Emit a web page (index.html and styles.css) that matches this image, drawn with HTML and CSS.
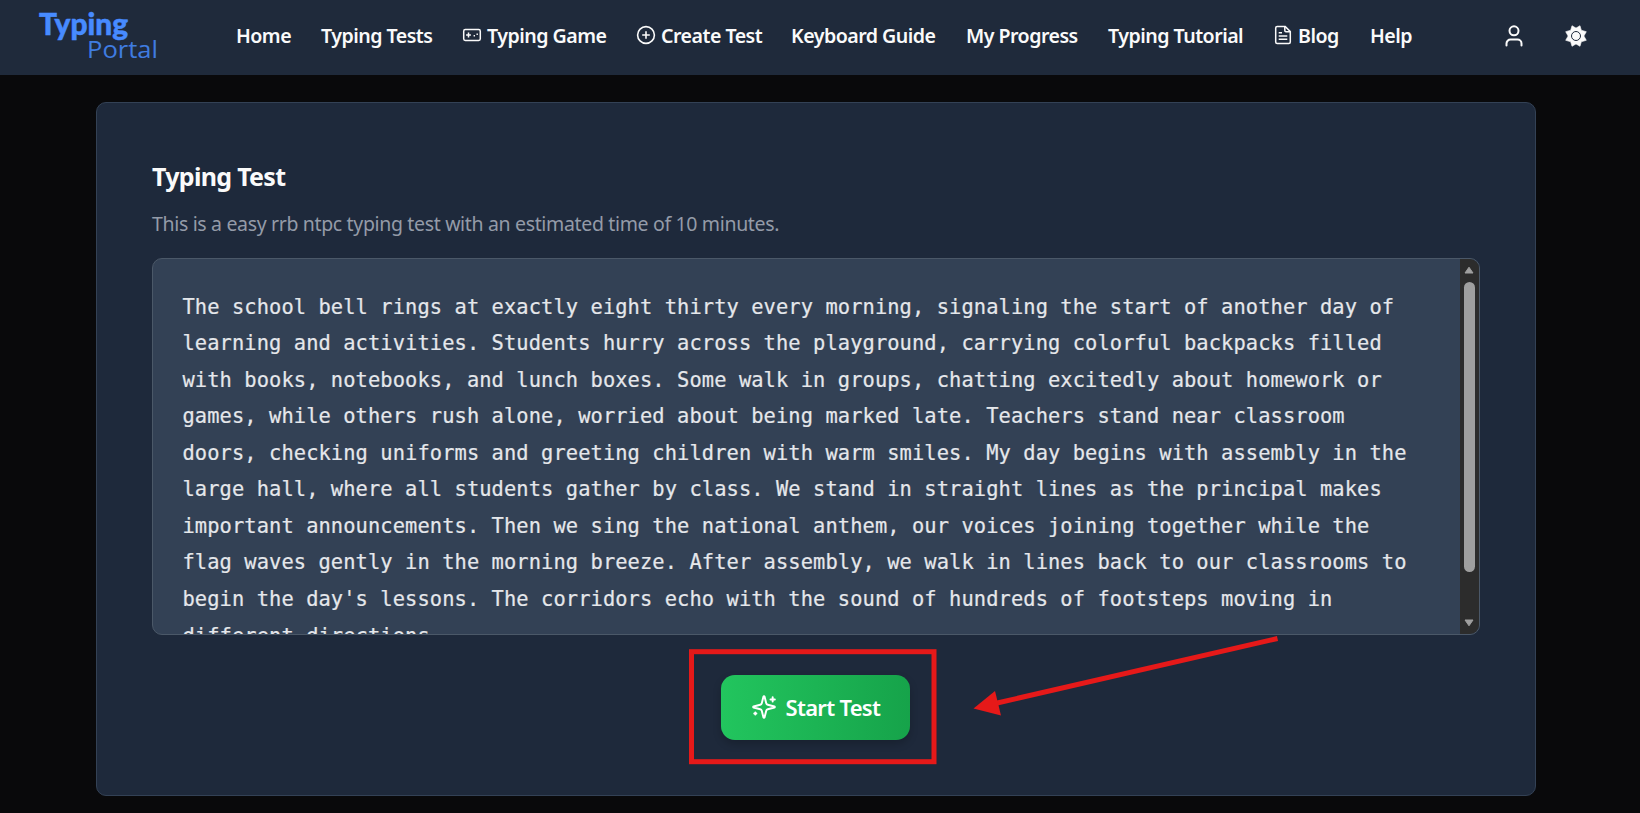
FILE: index.html
```html
<!DOCTYPE html>
<html lang="en">
<head>
  <meta charset="UTF-8" />
  <meta name="viewport" content="width=device-width, initial-scale=1.0"/>
  <title>Typing Portal</title>
  <link rel="stylesheet" href="styles.css">
</head>
<body>

  <!-- Header -->
  <header>
    <a class="logo" href="#">
      <svg width="130" height="64" viewBox="0 0 130 64">
        <text class="logo-top" x="9" y="33.5" textLength="89" lengthAdjust="spacingAndGlyphs">Typing</text>
        <text class="logo-bottom" x="57" y="57" textLength="71" lengthAdjust="spacingAndGlyphs">Portal</text>
      </svg>
    </a>
    <nav>
      <a class="home" href="#">Home</a>
      <a class="tests" href="#">Typing Tests</a>
      <a class="game" href="#">
        <svg width="20" height="20" viewBox="0 0 20 20" fill="none" stroke="currentColor" stroke-width="1.5">
          <rect x="1.7" y="4.6" width="16.6" height="10.8" rx="1.6"/>
          <path d="M6.5 7.6v4.8M4.1 10h4.8"/>
          <path d="M11.6 10.8h1.4M14.5 9.2h1.4"/>
        </svg>
        <span>Typing Game</span>
      </a>
      <a class="create" href="#">
        <svg width="20" height="20" viewBox="0 0 20 20" fill="none" stroke="currentColor" stroke-width="1.6">
          <circle cx="10" cy="10" r="8.4"/>
          <path d="M10 6.2v7.6M6.2 10h7.6"/>
        </svg>
        <span>Create Test</span>
      </a>
      <a class="guide" href="#">Keyboard Guide</a>
      <a class="progress" href="#">My Progress</a>
      <a class="tutorial" href="#">Typing Tutorial</a>
      <a class="blog" href="#">
        <svg width="18" height="20" viewBox="0 0 18 20" fill="none" stroke="currentColor" stroke-width="1.5" stroke-linejoin="round">
          <path d="M11 1.4H3.2A1.5 1.5 0 0 0 1.7 2.9v14.2a1.5 1.5 0 0 0 1.5 1.5h11.6a1.5 1.5 0 0 0 1.5-1.5V6.5z"/>
          <path d="M10.8 1.6v3.9a1.2 1.2 0 0 0 1.2 1.2h4.1M4.7 7.7H8M4.7 11h8.6M4.7 14.3h8.6"/>
        </svg>
        <span>Blog</span>
      </a>
      <a class="help" href="#">Help</a>
    </nav>
    <div class="tools">
      <svg width="22" height="24" viewBox="0 0 22 24" fill="none" stroke="currentColor" stroke-width="2" stroke-linecap="round">
        <circle cx="11" cy="6.8" r="4.5"/>
        <path d="M3.5 21.4v-1.9a4 4 0 0 1 4-4h7a4 4 0 0 1 4 4v1.9"/>
      </svg>
      <svg width="24" height="24" viewBox="0 0 24 24">
        <path fill="currentColor" d="M12 4.1 16 1.7 17.3 6.2 22.3 7.7 19.9 12 22.3 16.3 17.3 17.8 16 22.3 12 19.9 8 22.3 6.7 17.8 1.7 16.3 4.1 12 1.7 7.7 6.7 6.2 8 1.7z" stroke="currentColor" stroke-width=".6" stroke-linejoin="round"/>
        <circle class="sun-ring" cx="12" cy="12" r="4.5"/>
      </svg>
    </div>
  </header>

  <!-- Main Content -->
  <main>
    <h1>Typing Test</h1>
    <p class="info">This is a easy rrb ntpc typing test with an estimated time of 10 minutes.</p>

    <div class="passage">
      <p>The school bell rings at exactly eight thirty every morning, signaling the start of another day of learning and activities. Students hurry across the playground, carrying colorful backpacks filled with books, notebooks, and lunch boxes. Some walk in groups, chatting excitedly about homework or games, while others rush alone, worried about being marked late. Teachers stand near classroom doors, checking uniforms and greeting children with warm smiles. My day begins with assembly in the large hall, where all students gather by class. We stand in straight lines as the principal makes important announcements. Then we sing the national anthem, our voices joining together while the flag waves gently in the morning breeze. After assembly, we walk in lines back to our classrooms to begin the day's lessons. The corridors echo with the sound of hundreds of footsteps moving in different directions.</p>
      <div class="scrollbar">
        <svg width="10" height="8" viewBox="0 0 10 8"><path d="M5 1.2 9 7H1z"/></svg>
        <div class="thumb"></div>
        <svg class="down" width="10" height="8" viewBox="0 0 10 8"><path d="M5 6.8 1 1h8z"/></svg>
      </div>
    </div>

    <button class="start-btn">
      <svg width="26" height="26" viewBox="0 0 24 24" fill="none" stroke="currentColor" stroke-width="1.8" stroke-linecap="round" stroke-linejoin="round">
        <path d="M9.94 15.5A2 2 0 0 0 8.5 14.06l-6.14-1.58a.5.5 0 0 1 0-.96L8.5 9.94A2 2 0 0 0 9.94 8.5l1.58-6.14a.5.5 0 0 1 .96 0L14.06 8.5a2 2 0 0 0 1.44 1.44l6.14 1.58a.5.5 0 0 1 0 .96l-6.14 1.58a2 2 0 0 0-1.44 1.44l-1.58 6.14a.5.5 0 0 1-.96 0z"/>
        <path d="M20 3v4M22 5h-4M4 17v2M5 18H3"/>
      </svg>
      <span>Start Test</span>
    </button>
  </main>

  <!-- Pointer to the start button -->
  <svg class="callout" width="600" height="130" viewBox="0 0 600 130">
    <rect x="11.5" y="16.7" width="242.5" height="110"/>
    <path class="shaft" d="M597.5 3.5 315 68.5"/>
    <path class="tip" d="M293.5 73.5 315 56l6 24.5z"/>
  </svg>

</body>
</html>
```
FILE: styles.css
```css
:root {
  --bg-color: #09090b;
  --card-bg: #1e293b;
  --box-bg: #334155;
  --text-color: #fafafa;
  --mark: #e61919;
}

* {
  box-sizing: border-box;
}

body {
  position: relative;
  margin: 0;
  height: 813px;
  overflow: hidden;
  font-family: 'Noto Sans', 'Open Sans', sans-serif;
  background: var(--bg-color);
  color: var(--text-color);
}

header {
  display: flex;
  align-items: center;
  height: 75px;
  padding: 0 0 4px 30px;
  background: #1f2a3b;
}

.logo {
  width: 206px;
  height: 64px;
}

.logo svg {
  display: block;
  margin-top: -3px;
}

.logo-top {
  font: 900 30px Lato, sans-serif;
  fill: #478bff;
  stroke: #478bff;
  stroke-width: 0.5;
}

.logo-bottom {
  font: 400 24px 'Open Sans', sans-serif;
  fill: #3f7ce0;
}

nav {
  display: grid;
  grid-template-columns: 85px 141px 174px 155px 175px 142px 166px 96px 134px;
  align-items: center;
}

nav a {
  display: flex;
  align-items: center;
  color: var(--text-color);
  font-size: 19.6px;
  font-weight: 600;
  line-height: 28px;
  letter-spacing: -0.52px;
  text-decoration: none;
  white-space: nowrap;
}

nav svg {
  margin: -2px 5px 0 0;
  flex: none;
}

.blog svg {
  margin-right: 6px;
}

.tools {
  display: flex;
  gap: 39px;
  margin-left: -1px;
}

.sun-ring {
  fill: none;
  stroke: #1f2a3b;
  stroke-width: 1;
}

main {
  display: flex;
  flex-direction: column;
  width: 1440px;
  height: 694px;
  margin: 27px 0 0 96px;
  padding: 53px 55px 55px;
  background: var(--card-bg);
  border: 1px solid #334155;
  border-radius: 10px;
}

h1 {
  margin: 0;
  font-size: 25px;
  font-weight: 700;
  line-height: 40px;
  letter-spacing: -0.7px;
}

.info {
  margin: 12px 0 18px;
  color: #949ba8;
  font-size: 19.5px;
  line-height: 32px;
  letter-spacing: -0.34px;
}

.passage {
  display: flex;
  flex: none;
  height: 377px;
  overflow: hidden;
  background: var(--box-bg);
  border: 1px solid #4b5868;
  border-radius: 10px;
}

.passage p {
  flex: 1;
  margin: 0;
  padding: 29.5px 30px 0 29.5px;
  color: #e5e7eb;
  font-family: 'DejaVu Sans Mono', monospace;
  font-size: 20.4px;
  line-height: 36.56px;
  letter-spacing: 0.088px;
  -webkit-text-stroke: 0.2px #e5e7eb;
}

.scrollbar {
  display: flex;
  flex-direction: column;
  align-items: center;
  width: 19px;
  padding: 7px 0;
  background: #2c2c2c;
  fill: #9f9f9f;
  stroke: #9f9f9f;
  stroke-linejoin: round;
}

.thumb {
  width: 11px;
  height: 290px;
  margin: 8px 1px 0 0;
  background: #9f9f9f;
  border-radius: 6px;
}

.scrollbar svg {
  margin-right: 1px;
}

.scrollbar .down {
  margin-top: auto;
}

.start-btn {
  display: flex;
  align-items: center;
  align-self: center;
  width: 189px;
  height: 65px;
  margin: 40px 2px 0 0;
  padding: 0 0 2px 30px;
  gap: 9px;
  border: none;
  border-radius: 14px;
  background: linear-gradient(to right, #22c55e, #16a34a);
  box-shadow: 0 4px 8px rgba(0, 0, 0, 0.2);
  color: white;
  font-family: inherit;
  font-size: 22px;
  font-weight: 600;
  letter-spacing: -0.7px;
  white-space: nowrap;
}

.callout {
  position: absolute;
  left: 680px;
  top: 635px;
}

.callout rect {
  fill: none;
  stroke: var(--mark);
  stroke-width: 5;
}

.shaft {
  stroke: var(--mark);
  stroke-width: 5;
}

.tip {
  fill: var(--mark);
}
```
